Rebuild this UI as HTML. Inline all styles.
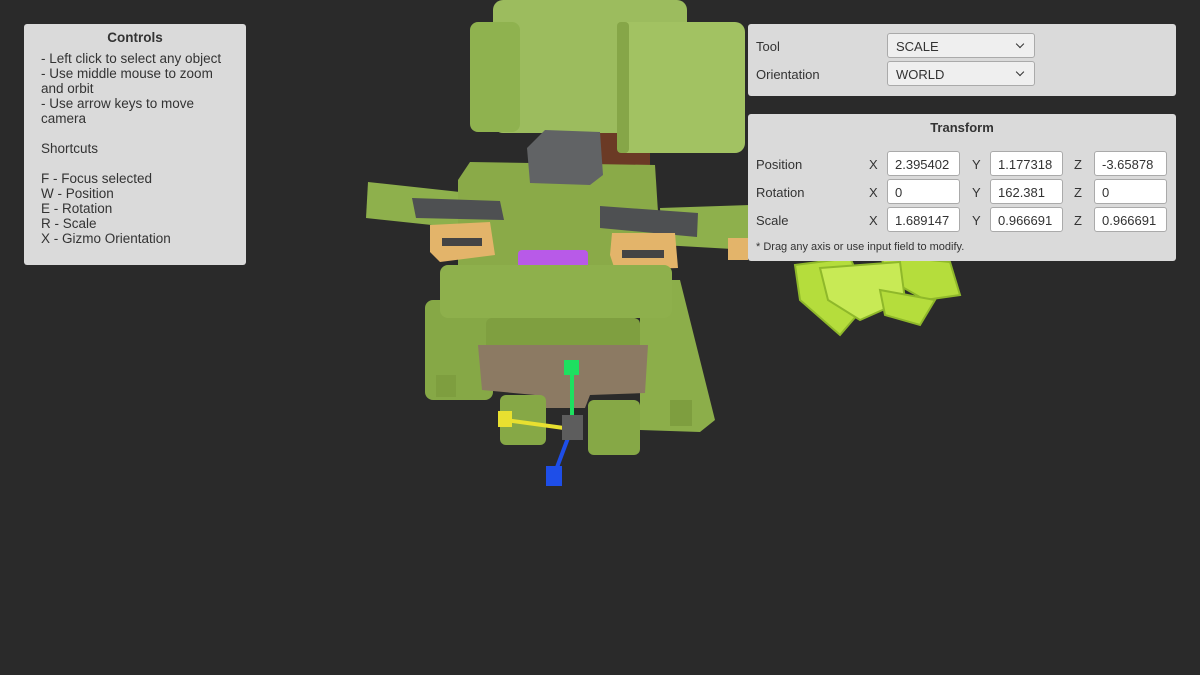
<!DOCTYPE html>
<html><head><style>
body{margin:0;width:1200px;height:675px;background:#2a2a2a;overflow:hidden;position:relative;font-family:"Liberation Sans",sans-serif;color:#333}
.p{position:absolute;background:#dadada;border-radius:3px}
.ctl{left:24px;top:24px;width:222px;height:241px;font-size:13.5px;line-height:15px}
.ctl h{display:block;text-align:center;font-weight:bold;margin-top:6px;margin-bottom:6px;font-size:13.5px}
.ctl div{padding-left:17px;white-space:nowrap}
.tool{left:748px;top:24px;width:428px;height:72px;font-size:13px}
.tr{left:748px;top:114px;width:428px;height:147px;font-size:13px}
.l{position:absolute}
.sel{position:absolute;left:139px;width:148px;height:25px;background:#efefef;border:1px solid #aaa;border-radius:3px;box-sizing:border-box;padding:5px 8px;font-size:13px}
.sel:after{content:"";position:absolute;right:11px;top:7px;width:5px;height:5px;border-right:1.5px solid #333;border-bottom:1.5px solid #333;transform:rotate(45deg)}
.in{position:absolute;width:73px;height:25px;background:#fff;border:1px solid #aaa;border-radius:3px;box-sizing:border-box;padding:5px 7px;font-size:13px}
</style></head><body>
<svg width="1200" height="675" style="position:absolute;left:0;top:0">
<g fill="#b5dd3c" stroke="#8fb82a" stroke-width="2">
<path d="M795 265 L850 258 L870 300 L840 335 L800 300Z"/>
<path d="M880 255 L950 262 L960 295 L925 300 L890 280Z"/>
<path d="M820 268 L900 262 L905 300 L860 320 L828 300Z" fill="#c8ea55"/>
<path d="M880 290 L935 300 L920 325 L885 315Z"/>
</g>
<rect x="600" y="125" width="50" height="40" fill="#6b3a25"/>
<rect x="493" y="0" width="194" height="133" rx="10" fill="#9cbc5e"/>
<rect x="470" y="22" width="50" height="110" rx="8" fill="#8fb24f"/>
<rect x="617" y="22" width="128" height="131" rx="10" fill="#a2c262"/>
<rect x="617" y="22" width="12" height="131" rx="4" fill="#86a648"/>
<path d="M368 182 L460 192 L460 228 L366 218Z" fill="#8eb04c"/>
<path d="M660 208 L750 205 L750 250 L662 245Z" fill="#8eb04c"/>
<rect x="425" y="300" width="68" height="100" rx="8" fill="#86a846"/>
<path d="M640 280 L680 280 L715 420 L700 432 L640 430Z" fill="#8cae4a"/>
<path d="M470 162 L655 165 L662 275 L458 270 L458 180Z" fill="#8aaa48"/>
<path d="M527 148 L545 130 L600 132 L603 175 L590 185 L530 183Z" fill="#616365"/>
<path d="M412 198 L500 201 L504 220 L416 218Z" fill="#4e5052"/>
<path d="M600 206 L698 213 L697 237 L600 228Z" fill="#4e5052"/>
<path d="M430 225 L490 222 L495 255 L440 262 L430 252Z" fill="#e3b46a"/>
<rect x="442" y="238" width="40" height="8" fill="#444"/>
<path d="M612 233 L675 233 L678 268 L615 270 L610 255Z" fill="#e3b46a"/>
<rect x="622" y="250" width="42" height="8" fill="#444"/>
<rect x="728" y="238" width="20" height="22" fill="#e3b46a"/>
<rect x="518" y="250" width="70" height="30" rx="4" fill="#b85ae8"/>
<rect x="440" y="265" width="232" height="53" rx="8" fill="#8eb04c"/>
<rect x="486" y="318" width="154" height="50" rx="6" fill="#7f9f40"/>
<path d="M478 345 L648 345 L645 393 L590 395 L585 408 L540 408 L535 395 L482 390Z" fill="#8c7a63"/>
<rect x="500" y="395" width="46" height="50" rx="6" fill="#86a846"/>
<rect x="588" y="400" width="52" height="55" rx="6" fill="#86a846"/>
<rect x="436" y="375" width="20" height="22" fill="#7e9e3f"/>
<rect x="670" y="400" width="22" height="26" fill="#7e9e3f"/>
<line x1="572" y1="368" x2="572" y2="418" stroke="#1de060" stroke-width="4"/>
<rect x="564" y="360" width="15" height="15" fill="#1de060"/>
<line x1="505" y1="420" x2="564" y2="428" stroke="#e8e030" stroke-width="4"/>
<rect x="498" y="411" width="14" height="16" fill="#e8e030"/>
<line x1="568" y1="438" x2="556" y2="470" stroke="#1e4ee8" stroke-width="4"/>
<rect x="546" y="466" width="16" height="20" fill="#1e4ee8"/>
<rect x="562" y="415" width="21" height="25" fill="#5d5d5d"/>
</svg>
<div class="p ctl"><h>Controls</h>
<div>- Left click to select any object<br>- Use middle mouse to zoom<br>and orbit<br>- Use arrow keys to move<br>camera<br><br>Shortcuts<br><br>F - Focus selected<br>W - Position<br>E - Rotation<br>R - Scale<br>X - Gizmo Orientation</div></div>
<div class="p tool">
<span class="l" style="left:8px;top:15px">Tool</span>
<div class="sel" style="top:9px">SCALE</div>
<span class="l" style="left:8px;top:43px">Orientation</span>
<div class="sel" style="top:37px">WORLD</div>
</div>
<div class="p tr">
<div class="l" style="left:0;right:0;top:6px;text-align:center;font-weight:bold">Transform</div>
<span class="l" style="left:8px;top:43px">Position</span>
<span class="l" style="left:8px;top:71px">Rotation</span>
<span class="l" style="left:8px;top:99px">Scale</span>
<span class="l" style="left:121px;top:43px">X</span><span class="l" style="left:224px;top:43px">Y</span><span class="l" style="left:326px;top:43px">Z</span>
<span class="l" style="left:121px;top:71px">X</span><span class="l" style="left:224px;top:71px">Y</span><span class="l" style="left:326px;top:71px">Z</span>
<span class="l" style="left:121px;top:99px">X</span><span class="l" style="left:224px;top:99px">Y</span><span class="l" style="left:326px;top:99px">Z</span>
<div class="in" style="left:139px;top:37px">2.395402</div><div class="in" style="left:242px;top:37px">1.177318</div><div class="in" style="left:346px;top:37px">-3.65878</div>
<div class="in" style="left:139px;top:65px">0</div><div class="in" style="left:242px;top:65px">162.381</div><div class="in" style="left:346px;top:65px">0</div>
<div class="in" style="left:139px;top:93px">1.689147</div><div class="in" style="left:242px;top:93px">0.966691</div><div class="in" style="left:346px;top:93px">0.966691</div>
<span class="l" style="left:8px;top:127px;font-size:11px">* Drag any axis or use input field to modify.</span>
</div>
</body></html>
